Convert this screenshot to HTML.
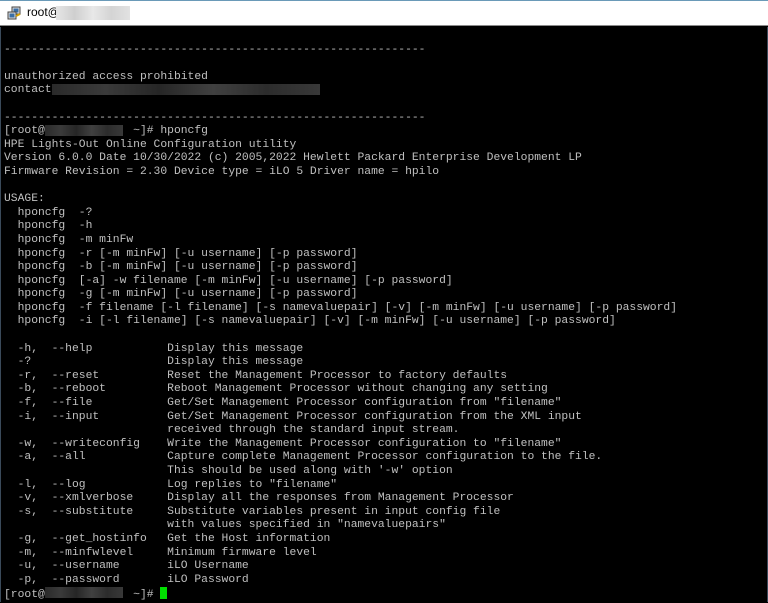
<!DOCTYPE html>
<html><head><meta charset="utf-8">
<style>
html,body{margin:0;padding:0;width:768px;height:602px;overflow:hidden;background:#000;}
#title{position:absolute;left:0;top:0;width:768px;height:26px;background:#fff;border-top:1px solid #6a9ab8;box-sizing:border-box;border-bottom:1px solid #8a8a8a;}
#title .t{position:absolute;left:27px;top:4px;font:12px "Liberation Sans",sans-serif;color:#000;}
#title .icon{position:absolute;left:7px;top:5px;width:15px;height:15px;}
.red{position:absolute;background:linear-gradient(90deg,#e6e6e6,#cfcfcf,#e8e8e8,#d4d4d4,#e2e2e2);}
#term{position:absolute;left:0;top:27px;width:768px;height:575px;background:#000;border-left:1px solid #3a4a5a;border-right:1px solid #3a4a5a;box-sizing:border-box;}
pre{position:absolute;left:3px;top:3px;margin:0;font-family:"Liberation Mono",monospace;font-size:11.33px;line-height:13.6px;color:#c0c0c0;}
.blk{position:absolute;height:11px;background:linear-gradient(90deg,#2a2a2a,#3a3a3a,#262626,#404040,#2c2c2c,#383838);}
.cur{display:inline-block;width:7px;height:12px;background:#00e000;vertical-align:-2px;}
</style></head><body>
<div id="title">
<svg class="icon" viewBox="0 0 15 15"><rect x="5" y="1" width="8" height="7" fill="#ddd" stroke="#444"/><rect x="6.5" y="2.5" width="5" height="4" fill="#3a6ea5"/><rect x="1" y="6" width="8" height="7" fill="#ddd" stroke="#444"/><rect x="2.5" y="7.5" width="5" height="4" fill="#3a6ea5"/><path d="M9 10 L13 8" stroke="#d4a000" stroke-width="2"/></svg>
<span class="t">root@</span>
<div class="red" style="left:56px;top:5px;width:74px;height:14px;"></div>
</div>
<div id="term">
<pre>

--------------------------------------------------------------

unauthorized access prohibited
contact

--------------------------------------------------------------
[root@             ~]# hponcfg
HPE Lights-Out Online Configuration utility
Version 6.0.0 Date 10/30/2022 (c) 2005,2022 Hewlett Packard Enterprise Development LP
Firmware Revision = 2.30 Device type = iLO 5 Driver name = hpilo

USAGE:
  hponcfg  -?
  hponcfg  -h
  hponcfg  -m minFw
  hponcfg  -r [-m minFw] [-u username] [-p password]
  hponcfg  -b [-m minFw] [-u username] [-p password]
  hponcfg  [-a] -w filename [-m minFw] [-u username] [-p password]
  hponcfg  -g [-m minFw] [-u username] [-p password]
  hponcfg  -f filename [-l filename] [-s namevaluepair] [-v] [-m minFw] [-u username] [-p password]
  hponcfg  -i [-l filename] [-s namevaluepair] [-v] [-m minFw] [-u username] [-p password]

  -h,  --help           Display this message
  -?                    Display this message
  -r,  --reset          Reset the Management Processor to factory defaults
  -b,  --reboot         Reboot Management Processor without changing any setting
  -f,  --file           Get/Set Management Processor configuration from "filename"
  -i,  --input          Get/Set Management Processor configuration from the XML input
                        received through the standard input stream.
  -w,  --writeconfig    Write the Management Processor configuration to "filename"
  -a,  --all            Capture complete Management Processor configuration to the file.
                        This should be used along with '-w' option
  -l,  --log            Log replies to "filename"
  -v,  --xmlverbose     Display all the responses from Management Processor
  -s,  --substitute     Substitute variables present in input config file
                        with values specified in "namevaluepairs"
  -g,  --get_hostinfo   Get the Host information
  -m,  --minfwlevel     Minimum firmware level
  -u,  --username       iLO Username
  -p,  --password       iLO Password
[root@             ~]# <span class="cur"></span></pre>
<div class="blk" style="left:51px;top:57px;width:268px;"></div>
<div class="blk" style="left:44px;top:98px;width:78px;"></div>
<div class="blk" style="left:44px;top:560px;width:78px;"></div>
</div>
</body></html>
